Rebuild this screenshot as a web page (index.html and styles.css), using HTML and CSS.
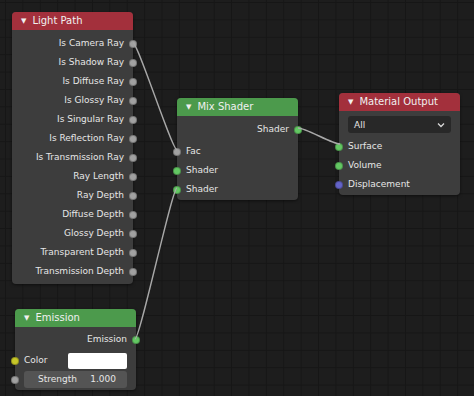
FILE: index.html
```html
<!DOCTYPE html>
<html lang="en">
<head>
    <meta charset="UTF-8">
    <title>Shader Editor</title>
    <link rel="stylesheet" href="styles.css">
</head>
<body>
    <div class="node-editor">
        <!-- Links between sockets -->
        <svg class="links" width="474" height="396">
            <path d="M133 43 C138 43, 172 150, 177 150" />
            <path d="M298 128 C306 128, 332 144, 340 144" />
            <path d="M135 339 C140 339, 172 188, 177 188" />
        </svg>

        <!-- Light Path -->
        <div class="node node-input light-path">
            <div class="node-header"><span class="arrow">▼</span>Light Path</div>
            <div class="node-body">
                <div class="row out">Is Camera Ray<span class="socket grey"></span></div>
                <div class="row out">Is Shadow Ray<span class="socket grey"></span></div>
                <div class="row out">Is Diffuse Ray<span class="socket grey"></span></div>
                <div class="row out">Is Glossy Ray<span class="socket grey"></span></div>
                <div class="row out">Is Singular Ray<span class="socket grey"></span></div>
                <div class="row out">Is Reflection Ray<span class="socket grey"></span></div>
                <div class="row out">Is Transmission Ray<span class="socket grey"></span></div>
                <div class="row out">Ray Length<span class="socket grey"></span></div>
                <div class="row out">Ray Depth<span class="socket grey"></span></div>
                <div class="row out">Diffuse Depth<span class="socket grey"></span></div>
                <div class="row out">Glossy Depth<span class="socket grey"></span></div>
                <div class="row out">Transparent Depth<span class="socket grey"></span></div>
                <div class="row out">Transmission Depth<span class="socket grey"></span></div>
            </div>
        </div>

        <!-- Mix Shader -->
        <div class="node node-shader mix-shader">
            <div class="node-header"><span class="arrow">▼</span>Mix Shader</div>
            <div class="node-body">
                <div class="row out">Shader<span class="socket green"></span></div>
                <div class="spacer"></div>
                <div class="row in"><span class="socket grey"></span>Fac</div>
                <div class="row in"><span class="socket green"></span>Shader</div>
                <div class="row in"><span class="socket green"></span>Shader</div>
            </div>
        </div>

        <!-- Material Output -->
        <div class="node node-input material-output">
            <div class="node-header"><span class="arrow">▼</span>Material Output</div>
            <div class="node-body">
                <div class="dropdown">
                    <span>All</span>
                    <svg width="8" height="6" viewBox="0 0 8 6"><path d="M1 1.5 L4 4.5 L7 1.5" /></svg>
                </div>
                <div class="row in"><span class="socket green"></span>Surface</div>
                <div class="row in"><span class="socket green"></span>Volume</div>
                <div class="row in"><span class="socket blue"></span>Displacement</div>
            </div>
        </div>

        <!-- Emission -->
        <div class="node node-shader emission">
            <div class="node-header"><span class="arrow">▼</span>Emission</div>
            <div class="node-body">
                <div class="row out">Emission<span class="socket green"></span></div>
                <div class="row in field-row color-row">
                    <span class="socket yellow"></span>
                    <span class="field-label">Color</span>
                    <span class="swatch"></span>
                </div>
                <div class="row in field-row">
                    <span class="socket grey"></span>
                    <span class="num-field"><span>Strength</span><span>1.000</span></span>
                </div>
            </div>
        </div>
    </div>
</body>
</html>
```

FILE: styles.css
```css
body {
    margin: 0;
    background-color: #1d1d1d;
    font-family: "DejaVu Sans", sans-serif;
    font-size: 9px;
    color: #e6e6e6;
}

.node-editor {
    position: relative;
    width: 474px;
    height: 396px;
    overflow: hidden;
    background-color: #1d1d1d;
    background-image:
        linear-gradient(to right, #161616 1px, transparent 1px),
        linear-gradient(to bottom, #161616 1px, transparent 1px);
    background-size: 17.4px 17.4px;
    background-position: 5px 2px;
}

.links {
    position: absolute;
    top: 0;
    left: 0;
    z-index: 2;
    pointer-events: none;
}

.links path {
    fill: none;
    stroke: #a8a8a8;
    stroke-width: 1.4;
}

/* Nodes */
.node {
    position: absolute;
    z-index: 1;
    background-color: #3d3d3d;
    border-radius: 4px;
    box-shadow: 0 1px 3px rgba(0, 0, 0, 0.5);
}

.node-header {
    height: 18px;
    line-height: 18px;
    padding-left: 9px;
    border-radius: 4px 4px 0 0;
    font-size: 10px;
    color: #f0f0f0;
}

.node-input .node-header {
    background-color: #a3303c;
}

.node-shader .node-header {
    background-color: #4c9a4c;
}

.arrow {
    display: inline-block;
    font-size: 7px;
    margin-right: 6px;
    vertical-align: 1px;
}

.node-body {
    padding: 4px 0 3px;
}

.row {
    position: relative;
    height: 19px;
    line-height: 19px;
    white-space: nowrap;
}

.row.out {
    text-align: right;
    padding-right: 9px;
}

.row.in {
    padding-left: 9px;
}

.spacer {
    height: 3px;
}

/* Sockets */
.socket {
    position: absolute;
    top: 5.5px;
    width: 8px;
    height: 8px;
    border-radius: 50%;
    box-sizing: border-box;
    border: 1px solid rgba(0, 0, 0, 0.25);
}

.row.out .socket {
    right: -4px;
}

.row.in .socket {
    left: -4px;
}

.socket.grey { background-color: #a1a1a1; }
.socket.green { background-color: #63c763; }
.socket.yellow { background-color: #c7c729; }
.socket.blue { background-color: #6363c7; }

/* Individual nodes */
.light-path {
    left: 12px;
    top: 12px;
    width: 121px;
    height: 272px;
}

.mix-shader {
    left: 177px;
    top: 98px;
    width: 121px;
    height: 102px;
}

.material-output {
    left: 339px;
    top: 93px;
    width: 121px;
    height: 102px;
}

.material-output .node-body {
    padding-top: 5px;
}

.emission {
    left: 15px;
    top: 309px;
    width: 121px;
    height: 81px;
}

.emission .node-body {
    padding-top: 3px;
}

/* Widgets */
.dropdown {
    display: flex;
    justify-content: space-between;
    align-items: center;
    height: 17px;
    margin: 0 9px 4px 9px;
    padding: 0 6px;
    background-color: #282828;
    border-radius: 3px;
    font-size: 9px;
}

.dropdown svg path {
    fill: none;
    stroke: #d8d8d8;
    stroke-width: 1.3;
}

.field-row {
    display: flex;
    align-items: center;
    padding-right: 9px;
}

.color-row {
    margin-top: 2px;
}

.field-label {
    flex: 1;
}

.swatch {
    width: 59px;
    height: 16px;
    background-color: #ffffff;
    border-radius: 2px;
}

.num-field {
    display: flex;
    justify-content: space-between;
    flex: 1;
    height: 17px;
    line-height: 17px;
    padding: 0 11px 0 14px;
    background-color: #545454;
    border-radius: 3px;
}
```
